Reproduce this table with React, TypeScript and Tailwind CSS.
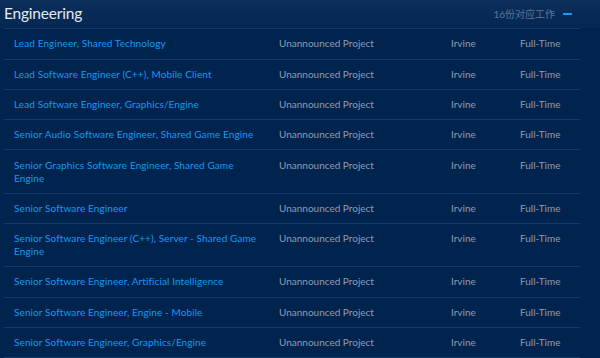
import React from "react";

type Job = {
  title: string;
  project: string;
  location: string;
  type: string;
};

const jobs: Job[] = [
  { title: "Lead Engineer, Shared Technology", project: "Unannounced Project", location: "Irvine", type: "Full-Time" },
  { title: "Lead Software Engineer (C++), Mobile Client", project: "Unannounced Project", location: "Irvine", type: "Full-Time" },
  { title: "Lead Software Engineer, Graphics/Engine", project: "Unannounced Project", location: "Irvine", type: "Full-Time" },
  { title: "Senior Audio Software Engineer, Shared Game Engine", project: "Unannounced Project", location: "Irvine", type: "Full-Time" },
  { title: "Senior Graphics Software Engineer, Shared Game Engine", project: "Unannounced Project", location: "Irvine", type: "Full-Time" },
  { title: "Senior Software Engineer", project: "Unannounced Project", location: "Irvine", type: "Full-Time" },
  { title: "Senior Software Engineer (C++), Server - Shared Game Engine", project: "Unannounced Project", location: "Irvine", type: "Full-Time" },
  { title: "Senior Software Engineer, Artificial Intelligence", project: "Unannounced Project", location: "Irvine", type: "Full-Time" },
  { title: "Senior Software Engineer, Engine - Mobile", project: "Unannounced Project", location: "Irvine", type: "Full-Time" },
  { title: "Senior Software Engineer, Graphics/Engine", project: "Unannounced Project", location: "Irvine", type: "Full-Time" },
];

const JobRow = ({ job }: { job: Job }) => {
  return (
    <div className="flex items-start border-t border-[#163a66] py-[8.15px] text-[10px] leading-[13px]">
      <a className="w-[275px] shrink-0 pl-[10px] pr-[20px] text-[#1399f2] tracking-[0.1px]" href="#">
        {job.title}
      </a>
      <div className="w-[172px] shrink-0 text-[#8d9cb1]">{job.project}</div>
      <div className="w-[69px] shrink-0 text-[#8d9cb1]">{job.location}</div>
      <div className="text-[#8d9cb1]">{job.type}</div>
    </div>
  );
};

export default function App() {
  return (
    <div
      className="h-[358px] w-[600px] overflow-hidden bg-[#01244e]"
      style={{ fontFamily: "Lato, 'Noto Sans CJK SC', sans-serif" }}
    >
      <div className="bg-gradient-to-b from-[#0b2e5a] to-[#042852] pl-[4px] pr-[20px]">
        <div className="flex h-[28.3px] items-center justify-between">
          <h2 className="text-[15.5px] leading-none tracking-[-0.2px] text-[#e4e9f0]">
            Engineering
          </h2>
          <div className="flex items-center gap-[8px] pr-[8px]">
            <span className="text-[10px] text-[#5f7594]">16份对应工作</span>
            <span className="block h-[2px] w-[9px] bg-[#1a9cf0]" />
          </div>
        </div>
      </div>
      <div className="pl-[4px] pr-[20px]">
        {jobs.map((job) => (
          <JobRow key={job.title} job={job} />
        ))}
        <div className="border-t border-[#163a66]" />
      </div>
    </div>
  );
}
